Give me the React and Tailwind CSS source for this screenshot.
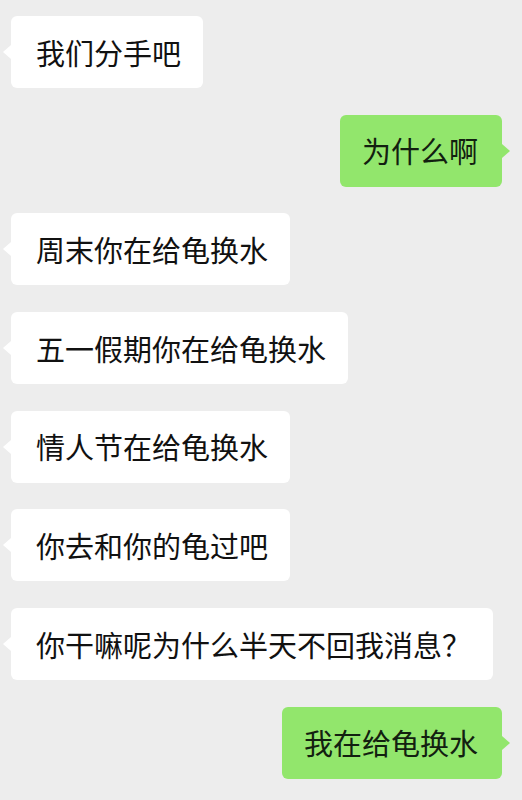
import React from 'react';

const messages = [
    { me: false, text: '我们分手吧' },
    { me: true, text: '为什么啊' },
    { me: false, text: '周末你在给龟换水' },
    { me: false, text: '五一假期你在给龟换水' },
    { me: false, text: '情人节在给龟换水' },
    { me: false, text: '你去和你的龟过吧' },
    { me: false, text: '你干嘛呢为什么半天不回我消息？' },
    { me: true, text: '我在给龟换水' },
];

function Bubble({ me, text }) {
    if (me) {
        return (
            <div className="flex justify-end pr-[20px]">
                <div className="relative h-[72px] flex items-center pl-[22px] pr-[24px] rounded-[6px] bg-[#92e66c] text-[#122010]">
                    {text}
                    <div className="absolute right-[-8px] top-[29px] w-0 h-0 border-y-[7px] border-y-transparent border-l-[8px] border-l-[#92e66c]"></div>
                </div>
            </div>
        );
    }
    return (
        <div className="flex justify-start pl-[11px]">
            <div className="relative h-[72px] flex items-center pl-[25px] pr-[22px] rounded-[6px] bg-white text-[#111]">
                {text}
                <div className="absolute left-[-8px] top-[29px] w-0 h-0 border-y-[7px] border-y-transparent border-r-[8px] border-r-white"></div>
            </div>
        </div>
    );
}

export default function App() {
    return (
        <div
            className="w-[522px] h-[800px] overflow-hidden bg-[#ededed] flex flex-col gap-[26.7px] pt-[16px] text-[29px] leading-none"
            style={{ fontFamily: '"Noto Sans CJK SC", "Noto Sans", sans-serif' }}
        >
            {messages.map((m, i) => (
                <Bubble key={i} me={m.me} text={m.text} />
            ))}
        </div>
    );
}
